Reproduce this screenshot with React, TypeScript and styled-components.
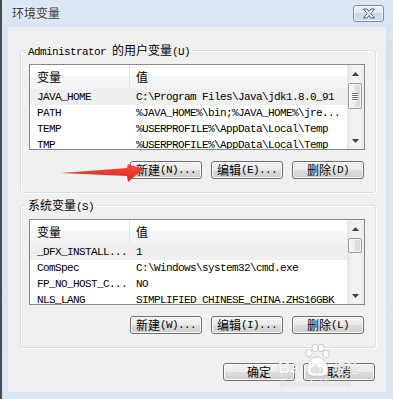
import React from "react";
import styled, { createGlobalStyle } from "styled-components";

const MONO = `"Liberation Mono", "DejaVu Sans Mono", monospace`;
const CJK = `"Noto Sans CJK SC", "Liberation Sans", sans-serif`;

const Global = createGlobalStyle`
  html, body { margin: 0; padding: 0; background: #fff; }
  body { width: 393px; height: 399px; overflow: hidden; }
`;

const Window = styled.div`
  position: relative;
  width: 393px;
  height: 399px;
  box-sizing: border-box;
  background: linear-gradient(#dce7f4, #d6e3f1 40px, #d9e5f2);
  border-left: 2px solid #4a4a4a;
  padding: 0 7px 7px 6px;
  display: flex;
  flex-direction: column;
  overflow: hidden;
`;

const TitleBar = styled.div`
  height: 27px;
  flex: none;
  display: flex;
  align-items: flex-start;
  justify-content: space-between;
  padding: 0 2px 0 4px;
`;

const Title = styled.span`
  margin-top: 6px;
  font-family: ${CJK};
  font-size: 12px;
  line-height: 14px;
  color: #3a3a3a;
  text-shadow: 0 0 4px rgba(255, 255, 255, 0.9);
`;

const CloseBtn = styled.div`
  margin-top: 5px;
  width: 31px;
  height: 17px;
  box-sizing: border-box;
  border: 1px solid #7d8ea3;
  border-radius: 3px;
  background: linear-gradient(#eef3f9 0%, #dde6f0 50%, #cbd8e6 50%, #d3dee9 100%);
  box-shadow: inset 0 0 0 1px rgba(255, 255, 255, 0.6);
  display: flex;
  align-items: center;
  justify-content: center;
`;

const Client = styled.div`
  flex: 1;
  background: #f0f0f0;
  display: flex;
  flex-direction: column;
  padding-top: 16px;
`;

const Group = styled.fieldset<{ $top: number }>`
  margin: ${(p) => p.$top}px 0 0 12px;
  width: 356px;
  box-sizing: border-box;
  min-width: 0;
  border: 1px solid #d5dfe5;
  border-radius: 3px;
  box-shadow: 1px 1px 0 #ffffff, inset 1px 1px 0 #ffffff;
  padding: 7px 10px 13px 8px;
  display: flex;
  flex-direction: column;
`;

const Legend = styled.legend`
  margin-left: -3px;
  padding: 0 2px;
  height: 14px;
  font-family: ${CJK};
  font-size: 12px;
  line-height: 14px;
  color: #000;
  white-space: nowrap;
`;

const Ascii = styled.span`
  font-family: ${MONO};
  font-size: 11px;
  letter-spacing: -0.6px;
`;

const ListView = styled.div`
  height: 86px;
  box-sizing: border-box;
  border: 1px solid #828790;
  background: #fff;
  display: flex;
  overflow: hidden;
`;

const ListBody = styled.div`
  flex: 1;
  min-width: 0;
  display: flex;
  flex-direction: column;
  overflow: hidden;
`;

const HeaderRow = styled.div`
  height: 24px;
  flex: none;
  display: grid;
  grid-template-columns: 100px 1fr;
  background: linear-gradient(#ffffff 0%, #ffffff 45%, #f6f7f9 45%, #f2f3f5 100%);
`;

const HeaderCell = styled.div<{ $first?: boolean }>`
  padding-left: ${(p) => (p.$first ? 7 : 6)}px;
  border-right: ${(p) => (p.$first ? "1px solid #e3e5e8" : "none")};
  font-family: ${CJK};
  font-size: 12px;
  line-height: 24px;
  color: #000;
`;

const Row = styled.div<{ $selected?: boolean }>`
  height: 16px;
  flex: none;
  display: grid;
  grid-template-columns: 100px 1fr;
  background: ${(p) => (p.$selected ? "#efefef" : "transparent")};
`;

const Cell = styled.div<{ $first?: boolean }>`
  padding-left: ${(p) => (p.$first ? 7 : 6)}px;
  font-family: ${MONO};
  font-size: 11px;
  letter-spacing: -0.6px;
  line-height: 16px;
  color: #000;
  white-space: nowrap;
  overflow: hidden;
`;

const ScrollBar = styled.div`
  width: 17px;
  flex: none;
  display: flex;
  flex-direction: column;
  background: linear-gradient(90deg, #e6e6e6 0%, #f2f2f2 35%, #f4f4f4 70%, #ebebeb 100%);
`;

const ArrowBtn = styled.div<{ $bottom?: boolean }>`
  height: 17px;
  flex: none;
  margin-top: ${(p) => (p.$bottom ? "auto" : "0")};
  display: flex;
  align-items: center;
  justify-content: center;
`;

const Thumb = styled.div<{ $h: number }>`
  margin: 1px 2px 0 1px;
  height: ${(p) => p.$h}px;
  box-sizing: border-box;
  border: 1px solid #9b9b9b;
  border-radius: 2px;
  background: linear-gradient(90deg, #f7f7f7 0%, #ececec 50%, #dedede 50%, #d8d8d8 100%);
  box-shadow: inset 0 0 0 1px rgba(255, 255, 255, 0.7);
  display: flex;
  flex-direction: column;
  align-items: center;
  justify-content: center;
  gap: 1px;
`;

const Grip = styled.div`
  width: 6px;
  height: 1px;
  background: #6e6e6e;
  box-shadow: 0 1px 0 #fff;
`;

const ButtonRow = styled.div<{ $top: number; $right: number }>`
  margin-top: ${(p) => p.$top}px;
  padding-right: ${(p) => p.$right}px;
  display: flex;
  justify-content: flex-end;
  gap: ${(p) => (p.$right > 5 ? 8 : 9)}px;
`;

const Btn = styled.div`
  width: 72px;
  height: 18px;
  box-sizing: border-box;
  border: 1px solid #707070;
  border-radius: 3px;
  background: linear-gradient(#f2f2f2 0%, #ebebeb 50%, #dddddd 50%, #cfcfcf 100%);
  box-shadow: inset 0 0 0 1px #fbfbfb;
  display: flex;
  align-items: center;
  justify-content: center;
  font-family: ${CJK};
  font-size: 12px;
  line-height: 14px;
  color: #000;
  white-space: nowrap;
`;

const ArrowOverlay = styled.svg`
  position: absolute;
  left: 0;
  top: 0;
  width: 393px;
  height: 399px;
  pointer-events: none;
`;

const Watermark = styled.div`
  position: absolute;
  left: 276px;
  top: 342px;
  width: 92px;
  height: 48px;
  pointer-events: none;
  display: flex;
  flex-direction: column;
  align-items: flex-start;
  color: rgba(255, 255, 255, 0.92);
  text-shadow: 0 0 1px rgba(120, 120, 120, 0.55);
`;

const MarkLine = styled.div`
  display: flex;
  align-items: flex-end;
  height: 36px;
`;

const MarkBai = styled.span`
  font-family: "Liberation Sans", sans-serif;
  font-weight: bold;
  font-size: 17px;
  line-height: 20px;
  letter-spacing: -0.5px;
`;

const MarkCn = styled.span`
  font-family: ${CJK};
  font-size: 13px;
  line-height: 20px;
  margin-left: 2px;
`;

const MarkUrl = styled.span`
  font-family: "Liberation Serif", serif;
  font-size: 9px;
  line-height: 10px;
  margin-left: 2px;
  letter-spacing: 0.2px;
`;

type Item = { name: string; value: string };

const userVars: Item[] = [
  { name: "JAVA_HOME", value: "C:\\Program Files\\Java\\jdk1.8.0_91" },
  { name: "PATH", value: "%JAVA_HOME%\\bin;%JAVA_HOME%\\jre..." },
  { name: "TEMP", value: "%USERPROFILE%\\AppData\\Local\\Temp" },
  { name: "TMP", value: "%USERPROFILE%\\AppData\\Local\\Temp" },
];

const sysVars: Item[] = [
  { name: "_DFX_INSTALL...", value: "1" },
  { name: "ComSpec", value: "C:\\Windows\\system32\\cmd.exe" },
  { name: "FP_NO_HOST_C...", value: "NO" },
  { name: "NLS_LANG", value: "SIMPLIFIED CHINESE_CHINA.ZHS16GBK" },
];

const UpGlyph = () => (
  <svg width="7" height="4" viewBox="0 0 7 4">
    <path d="M0 4 L3.5 0 L7 4 Z" fill="#404040" />
  </svg>
);
const DownGlyph = () => (
  <svg width="7" height="4" viewBox="0 0 7 4">
    <path d="M0 0 L3.5 4 L7 0 Z" fill="#404040" />
  </svg>
);

const VarList = ({ items, thumb, grip }: { items: Item[]; thumb: number; grip: boolean }) => (
  <ListView>
    <ListBody>
      <HeaderRow>
        <HeaderCell $first>变量</HeaderCell>
        <HeaderCell>值</HeaderCell>
      </HeaderRow>
      {items.map((it, i) => (
        <Row key={it.name} $selected={i === 0}>
          <Cell $first>{it.name}</Cell>
          <Cell>{it.value}</Cell>
        </Row>
      ))}
    </ListBody>
    <ScrollBar>
      <ArrowBtn>
        <UpGlyph />
      </ArrowBtn>
      <Thumb $h={thumb}>
        {grip && (
          <>
            <Grip />
            <Grip />
            <Grip />
            <Grip />
          </>
        )}
      </Thumb>
      <ArrowBtn $bottom>
        <DownGlyph />
      </ArrowBtn>
    </ScrollBar>
  </ListView>
);

const Label = ({ cn, key1, dots }: { cn: string; key1: string; dots?: boolean }) => (
  <>
    {cn}
    <Ascii>
      ({key1}){dots ? "..." : ""}
    </Ascii>
  </>
);

export default function App() {
  return (
    <>
      <Global />
      <Window>
        <TitleBar>
          <Title>环境变量</Title>
          <CloseBtn>
            <svg width="14" height="11" viewBox="0 0 14 11">
              <path
                d="M1.5 1 H5 L7 3.5 L9 1 H12.5 L8.8 5.5 L12.5 10 H9 L7 7.5 L5 10 H1.5 L5.2 5.5 Z"
                fill="#ffffff"
                stroke="#4c5a6c"
                strokeWidth="1"
                strokeLinejoin="round"
              />
            </svg>
          </CloseBtn>
        </TitleBar>
        <Client>
          <Group $top={0}>
            <Legend>
              <Ascii>Administrator </Ascii>的用户变量<Ascii>(U)</Ascii>
            </Legend>
            <VarList items={userVars} thumb={26} grip />
            <ButtonRow $top={11} $right={1}>
              <Btn>
                <Label cn="新建" key1="N" dots />
              </Btn>
              <Btn>
                <Label cn="编辑" key1="E" dots />
              </Btn>
              <Btn>
                <Label cn="删除" key1="D" />
              </Btn>
            </ButtonRow>
          </Group>
          <Group $top={5}>
            <Legend>
              系统变量<Ascii>(S)</Ascii>
            </Legend>
            <VarList items={sysVars} thumb={15} grip={false} />
            <ButtonRow $top={11} $right={1}>
              <Btn>
                <Label cn="新建" key1="W" dots />
              </Btn>
              <Btn>
                <Label cn="编辑" key1="I" dots />
              </Btn>
              <Btn>
                <Label cn="删除" key1="L" />
              </Btn>
            </ButtonRow>
          </Group>
          <ButtonRow $top={15} $right={11}>
            <Btn>确定</Btn>
            <Btn>取消</Btn>
          </ButtonRow>
        </Client>
        <ArrowOverlay viewBox="0 0 393 399">
          <defs>
            <linearGradient id="arrowFill" x1="0" y1="0" x2="0" y2="1">
              <stop offset="0" stopColor="#ff4a3c" />
              <stop offset="1" stopColor="#d8221c" />
            </linearGradient>
          </defs>
          <polygon
            points="59,173 125,168 126,164 141,169 126,182 125,176"
            fill="url(#arrowFill)"
          />
        </ArrowOverlay>
        <Watermark>
          <MarkLine>
            <MarkBai>Bai</MarkBai>
            <svg width="28" height="34" viewBox="0 0 28 34">
              <g fill="rgba(255,255,255,0.9)" stroke="rgba(140,140,140,0.5)" strokeWidth="0.8">
                <ellipse cx="6" cy="9" rx="3.2" ry="4" />
                <ellipse cx="12" cy="4" rx="3" ry="3.8" />
                <ellipse cx="18" cy="4" rx="3" ry="3.8" />
                <ellipse cx="23" cy="10" rx="3" ry="3.8" />
                <path d="M4 26 C4 17 9 13 14 13 C19 13 25 18 25 26 C25 31 20 33 14 32 C8 33 4 31 4 26 Z" />
              </g>
              <text
                x="14"
                y="29"
                textAnchor="middle"
                fontFamily="Liberation Sans, sans-serif"
                fontWeight="bold"
                fontSize="10"
                fill="#e4e4e4"
              >
                du
              </text>
            </svg>
            <MarkCn>经验</MarkCn>
          </MarkLine>
          <MarkUrl>jingyan.baidu.com</MarkUrl>
        </Watermark>
      </Window>
    </>
  );
}
